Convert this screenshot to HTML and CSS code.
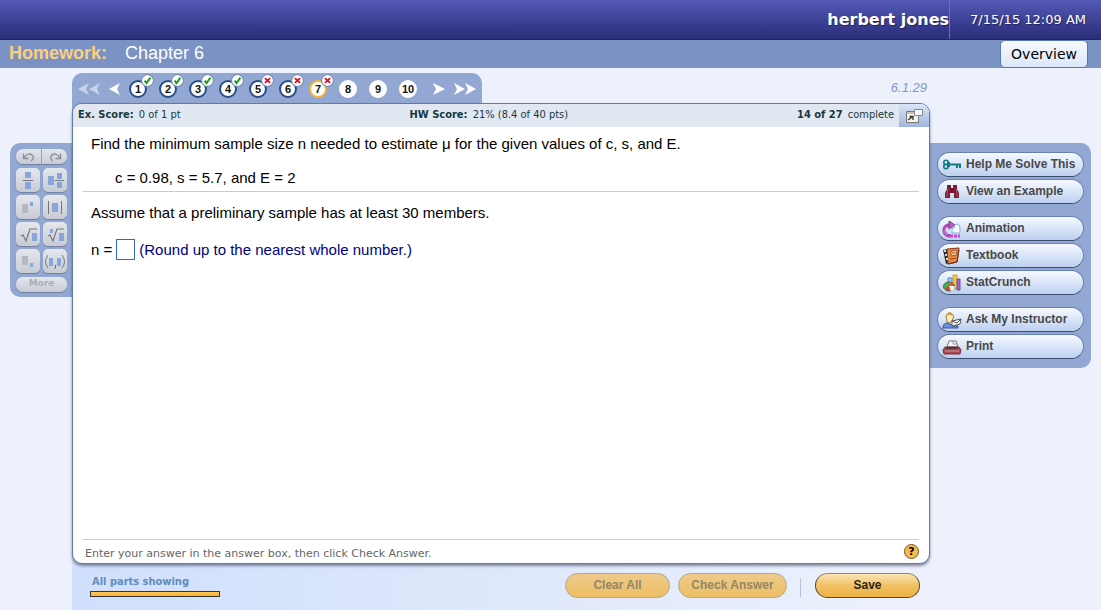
FILE: index.html
```html
<!DOCTYPE html>
<html lang="en">
<head>
    <meta charset="UTF-8">
    <meta name="viewport" content="width=device-width, initial-scale=1.0">
    <title>Homework: Chapter 6</title>
    <link rel="stylesheet" href="styles.css">
</head>
<body>
    <!-- shared icon shapes -->
    <svg class="defs" width="0" height="0" aria-hidden="true">
        <symbol id="correct" viewBox="0 0 12 12">
            <circle cx="6" cy="6" r="5.5" fill="#fff" stroke="#7187b5"/>
            <path d="M3.3 6.2l1.8 2.2 3.6-5" fill="none" stroke="#15a015" stroke-width="1.8"/>
        </symbol>
        <symbol id="wrong" viewBox="0 0 12 12">
            <circle cx="6" cy="6" r="5.5" fill="#fff" stroke="#7187b5"/>
            <path d="M3.6 3.8l4.8 4.4M8.4 3.8l-4.8 4.4" stroke="#d11222" stroke-width="1.7"/>
        </symbol>
    </svg>

    <header class="topbar">
        <span class="user">herbert jones</span>
        <span class="date">7/15/15 12:09 AM</span>
    </header>

    <div class="titlebar">
        <h1><span class="label">Homework:</span> Chapter 6</h1>
        <button class="overview">Overview</button>
    </div>

    <div class="workspace">
        <aside class="tools">
            <div class="history">
                <button aria-label="Undo"><svg width="14" height="10" viewBox="0 0 14 10"><path d="M1.500 1.500v5h5M2 6c2-4 6-5 8-3s2 4-1 6" fill="none" stroke="#888d99" stroke-width="1.300"/></svg></button>
                <button aria-label="Redo"><svg width="14" height="10" viewBox="0 0 14 10"><path d="M12.500 1.500v5h-5M12 6c-2-4-6-5-8-3s-2 4 1 6" fill="none" stroke="#888d99" stroke-width="1.300"/></svg></button>
            </div>
            <div class="math">
                <button aria-label="Fraction"><svg width="22" height="22"><path d="M8 3h6v6H8zM8 13h6v7H8z" fill="#8aa5da"/><path d="M6 11.500h10" stroke="#777"/></svg></button>
                <button aria-label="Mixed number"><svg width="22" height="22"><path d="M4 7h6v9H4zM13 4h5v6h-5zM13 13h5v6h-5z" fill="#8aa5da"/><path d="M11 11.500h9" stroke="#777"/></svg></button>
                <button aria-label="Exponent"><svg width="22" height="22"><path d="M5 8h6v9H5z" fill="#b5b9bd"/><path d="M13 6h3v4h-3z" fill="#8aa5da"/></svg></button>
                <button aria-label="Absolute value"><svg width="22" height="22"><path d="M8 7h6v9H8z" fill="#8aa5da"/><path d="M4.500 5v13M17.500 5v13" stroke="#777"/></svg></button>
                <button aria-label="Square root"><svg width="22" height="22"><path d="M15 10h5v8h-5z" fill="#8aa5da"/><path d="M4 13l2-1 3 6 4-12h7" fill="none" stroke="#777" stroke-width="1.200"/></svg></button>
                <button aria-label="Root"><svg width="22" height="22"><path d="M15 10h5v8h-5zM6 6h3v4H6z" fill="#8aa5da"/><path d="M4 13l2-1 3 6 4-12h7" fill="none" stroke="#777" stroke-width="1.200"/></svg></button>
                <button aria-label="Subscript"><svg width="22" height="22"><path d="M5 6h6v9H5z" fill="#b5b9bd"/><path d="M13 13h3v4h-3z" fill="#8aa5da"/></svg></button>
                <button aria-label="Ordered pair"><svg width="22" height="22"><path d="M5 8h4v8H5zM13 8h4v8h-4z" fill="#8aa5da"/><path d="M4 5q-5 7 0 13M18 5q5 7 0 13" fill="none" stroke="#777"/><path d="M11.500 15v2l-1 2" fill="none" stroke="#666"/></svg></button>
            </div>
            <button class="more" disabled>More</button>
        </aside>

        <main class="center">
            <div class="navrow">
                <nav class="questions">
                    <button aria-label="First question"><svg class="faded" width="22" height="14" viewBox="0 0 22 14"><path d="M0 7l11-6-3 6 3 6zM11 7l11-6-3 6 3 6z"/></svg></button>
                    <button aria-label="Previous question"><svg width="11" height="14" viewBox="0 0 11 14"><path d="M0 7l11-6-3 6 3 6z"/></svg></button>
                    <div class="numbers">
                        <button class="num done">1<svg class="badge"><use href="#correct"/></svg></button>
                        <button class="num done">2<svg class="badge"><use href="#correct"/></svg></button>
                        <button class="num done">3<svg class="badge"><use href="#correct"/></svg></button>
                        <button class="num done">4<svg class="badge"><use href="#correct"/></svg></button>
                        <button class="num done">5<svg class="badge"><use href="#wrong"/></svg></button>
                        <button class="num done">6<svg class="badge"><use href="#wrong"/></svg></button>
                        <button class="num current">7<svg class="badge"><use href="#wrong"/></svg></button>
                        <button class="num">8</button>
                        <button class="num">9</button>
                        <button class="num">10</button>
                    </div>
                    <button aria-label="Next question"><svg width="12" height="14" viewBox="0 0 12 14"><path d="M12 7L0 1l3 6-3 6z"/></svg></button>
                    <button aria-label="Last question"><svg width="22" height="14" viewBox="0 0 22 14"><path d="M11 7L0 1l3 6-3 6zM22 7L11 1l3 6-3 6z"/></svg></button>
                </nav>
                <span class="section">6.1.29</span>
            </div>

            <section class="card">
                <div class="scores">
                    <span><b>Ex. Score:</b> 0 of 1 pt</span>
                    <span><b>HW Score:</b> 21% (8.4 of 40 pts)</span>
                    <span><b>14 of 27</b> complete</span>
                    <button class="popout" aria-label="Open in new window">
                        <svg width="18" height="16" viewBox="0 0 18 16">
                            <path d="M1.500 3.500h12v11h-12z" fill="#f4f4ef" stroke="#777"/>
                            <path d="M2 5h11" stroke="#999"/>
                            <path d="M9.500 1.500h8v6h-8z" fill="#f7f9fd" stroke="#888"/>
                            <path d="M3 12l4-3M4.500 8.500H8V12" fill="none" stroke="#333" stroke-width="1.300"/>
                        </svg>
                    </button>
                </div>
                <div class="problem">
                    <p class="prompt">Find the minimum sample size n needed to estimate μ for the given values of c, s, and E.</p>
                    <p class="given">c = 0.98, s = 5.7, and E = 2</p>
                    <hr>
                    <p class="assume">Assume that a preliminary sample has at least 30 members.</p>
                    <div class="answer">
                        <label for="n">n =</label>
                        <input type="text" id="n">
                        <span class="hint">(Round up to the nearest whole number.)</span>
                    </div>
                </div>
                <div class="help">
                    <span>Enter your answer in the answer box, then click Check Answer.</span>
                    <button aria-label="Help">?</button>
                </div>
            </section>

            <footer class="actions">
                <div class="parts">
                    <span>All parts showing</span>
                    <div class="progress"></div>
                </div>
                <button class="pill clear" disabled>Clear All</button>
                <button class="pill check" disabled>Check Answer</button>
                <div class="divider"></div>
                <button class="pill save">Save</button>
            </footer>
        </main>

        <aside class="resources">
            <div class="group">
                <button>
                    <svg width="20" height="18" viewBox="0 0 20 18"><path d="M7 8.500h12M15 8v4M18 8v4" fill="none" stroke="#137a82" stroke-width="2"/><circle cx="4" cy="6.500" r="2.200" fill="none" stroke="#137a82" stroke-width="1.600"/><circle cx="4" cy="10.500" r="2.200" fill="none" stroke="#137a82" stroke-width="1.600"/><path d="M5 6h3v5H5z" fill="#137a82"/></svg>
                    Help Me Solve This
                </button>
                <button>
                    <svg width="20" height="18" viewBox="0 0 20 18"><path d="M5 2h4v3h2V2h4v4l2 4v5h-5v-5H8v5H3v-5l2-4z" fill="#7c1c30"/><path d="M6 6l-1.500 8M14 6l1.500 8" fill="none" stroke="#b55a68"/><path d="M8 7h4" stroke="#4d0d1c"/></svg>
                    View an Example
                </button>
            </div>
            <div class="group">
                <button>
                    <svg width="20" height="18" viewBox="0 0 20 18"><path d="M8 16C1 15 0 7 7 5" fill="none" stroke="#a84cae" stroke-width="3.500"/><path d="M7 1l6 4-6 4z" fill="#b862b8" stroke="#803584"/><path d="M5 15C3 13 2 10 5 7" fill="none" stroke="#efb8ef"/><path d="M10 13v-3q0-2 2-2 0-4 3-4 3 0 3 4v5z" fill="#f4f8ff" stroke="#82b1df"/><path d="M8 16h10" stroke="#c64bd0" stroke-width="3" stroke-dasharray="3 1"/></svg>
                    Animation
                </button>
                <button>
                    <svg width="20" height="18" viewBox="0 0 20 18"><path d="M1 3l4-1 2 14-3 1z" fill="#282c38"/><path d="M5 2l12-1-2 14-9 2z" fill="#e78a40" stroke="#843918"/><path d="M3 3v2M4 7v2M5 11v2" stroke="#d6d8dc" stroke-width="2"/><path d="M9 4l6-1-1 5-5 1z" fill="#f5d39c" stroke="#ad592d"/><path d="M10 6l3-.5M8 12l6-1" stroke="#944a25"/><path d="M6 17l9-2 2-12" fill="none" stroke="#593425"/></svg>
                    Textbook
                </button>
                <button>
                    <svg width="20" height="18" viewBox="0 0 20 18"><path d="M11 1h4v14h-4z" fill="#f5cf30" stroke="#bca03a"/><path d="M15 5h3v11h-3z" fill="#9c69d0" stroke="#7548a4"/><path d="M6 4h4v6H6z" fill="#9cc7ee" stroke="#6589b5"/><ellipse cx="7" cy="12.500" rx="5.500" ry="4.500" fill="#43ad4b" stroke="#326d43"/><path d="M7 12h5.500a5 4 0 0 1-4 5z" fill="#f5f5ee"/><path d="M7 12V8q4 0 5 4z" fill="#e95346"/><path d="M7 12l-4 3q2 2 5.500 2z" fill="#de372f"/></svg>
                    StatCrunch
                </button>
            </div>
            <div class="group">
                <button>
                    <svg width="20" height="18" viewBox="0 0 20 18"><path d="M1 16q0-4 5-4l5 3h5v2H1z" fill="#6790d5" stroke="#385b98"/><path d="M5 9l-1-4q1-4 5-3 4 2 2 6l-3 4-3-1z" fill="#fff0c4" stroke="#9c7b39"/><path d="M4 5q1-4 5-3l2 3-4-1z" fill="#d2a845"/><path d="M10 10l9-2-1 5-8 2z" fill="#fff" stroke="#54545c"/><path d="M10 10l5 2 4-4" fill="none" stroke="#555"/></svg>
                    Ask My Instructor
                </button>
                <button>
                    <svg width="20" height="18" viewBox="0 0 20 18"><path d="M5 9l2-6h7l2 6z" fill="#f8f8fa" stroke="#777"/><path d="M11 3v3h4" fill="none" stroke="#999"/><path d="M3 9h14l2 3-1 4H2l-1-4z" fill="#a84b57" stroke="#78303b"/><path d="M5 9h10l1 2H4z" fill="#4d3540"/><path d="M3 13h14" stroke="#d88d96"/></svg>
                    Print
                </button>
            </div>
        </aside>
    </div>
</body>
</html>
```

FILE: styles.css
```css
* {
    box-sizing: border-box;
}

body {
    margin: 0;
    min-height: 100vh;
    display: flex;
    flex-direction: column;
    font-family: "Liberation Sans", Arial, sans-serif;
    background: #edf1fc;
}

button {
    margin: 0;
    padding: 0;
    border: none;
    background: none;
    font-family: inherit;
    cursor: pointer;
}

button:disabled {
    cursor: default;
}

svg {
    display: block;
    flex: none;
}

.defs {
    position: absolute;
}

/* header */
.topbar {
    height: 40px;
    display: flex;
    justify-content: flex-end;
    align-items: center;
    color: #fff;
    font-family: "DejaVu Sans", Verdana, sans-serif;
    background: linear-gradient(#5459b6, #3a3e91 60%, #2b2e78);
    border-bottom: 1px solid #23265f;
    text-shadow: 1px 1px 1px rgba(0,0,0,0.4);
}

.user {
    font-size: 16px;
    font-weight: bold;
}

.date {
    padding: 0 15px 0 20px;
    border-left: 1px solid #6a70b9;
    font-size: 13px;
    line-height: 39px;
}

.titlebar {
    height: 28px;
    padding: 0 13px 0 9px;
    display: flex;
    justify-content: space-between;
    align-items: center;
    background: #7a93c4;
}

.titlebar h1 {
    margin: 0;
    padding-bottom: 2px;
    font-size: 18px;
    font-weight: normal;
    color: #fff;
}

.titlebar .label {
    margin-right: 13px;
    font-weight: bold;
    color: #fbd07c;
}

.overview {
    height: 28px;
    padding: 0 10px;
    border: 1px solid #5878ae;
    border-radius: 5px;
    font-family: "DejaVu Sans", Verdana, sans-serif;
    font-size: 14px;
    background: linear-gradient(#f7faff, #dbe7f9);
}

.workspace {
    flex: 1;
    display: flex;
    align-items: flex-start;
    padding: 0 10px;
}

/* math palette */
.tools {
    width: 62px;
    margin-top: 75px;
    padding: 6px 5px 5px 6px;
    display: flex;
    flex-direction: column;
    gap: 4px;
    background: #92a8d3;
    border-radius: 10px 0 0 10px;
}

.tools button {
    display: flex;
    justify-content: center;
    align-items: center;
    border-radius: 5px;
    background: linear-gradient(#e4e7ed, #c7cbd4);
    box-shadow: 0 1px 1px #6f7d99;
}

.history {
    display: flex;
    gap: 1px;
}

.history button {
    flex: 1;
    height: 15px;
}

.history button:first-child {
    border-radius: 7px 0 0 7px;
}

.history button:last-child {
    border-radius: 0 7px 7px 0;
}

.math {
    display: grid;
    grid-template-columns: 1fr 1fr;
    gap: 3px;
}

.math button {
    height: 24px;
}

.tools .more {
    height: 15px;
    padding-bottom: 3px;
    border-radius: 7px;
    color: #a9b0b2;
    font-family: "DejaVu Sans", Verdana, sans-serif;
    font-size: 9px;
    font-weight: bold;
}

/* center column */
.center {
    flex: 1;
    align-self: stretch;
    min-width: 0;
    display: flex;
    flex-direction: column;
}

.navrow {
    height: 35px;
    padding-top: 5px;
    display: flex;
    justify-content: space-between;
}

/* runs on behind the rounded corner of the card */
.questions {
    margin-bottom: -10px;
    padding: 1px 6px 10px;
    display: flex;
    align-items: center;
    gap: 9px;
    background: #92a8d3;
    border-radius: 10px 10px 0 0;
}

.questions path {
    fill: #fff;
}

.questions .faded {
    opacity: 0.5;
}

.numbers {
    display: flex;
    gap: 12px;
    margin-right: 7px;
}

.num {
    position: relative;
    width: 18px;
    height: 18px;
    border: 2px solid #fff;
    border-radius: 50%;
    background: #fff;
    color: #111;
    font-size: 11px;
    font-weight: bold;
    line-height: 14px;
    white-space: nowrap;
    display: flex;
    justify-content: center;
}

.num.done {
    border-color: #284d8a;
}

.num.current {
    border-color: #fab52f;
}

.badge {
    position: absolute;
    top: -8px;
    right: -9px;
    width: 13px;
    height: 13px;
}

.questions .badge path {
    fill: none;
}

.section {
    padding: 7px 3px 0 0;
    font-size: 13px;
    font-style: italic;
    color: #7f97cb;
}

.card {
    position: relative;
    flex: 1;
    display: flex;
    flex-direction: column;
    overflow: hidden;
    background: #fff;
    border: 1px solid #6079ae;
    border-radius: 10px;
    box-shadow: 0 2px 3px rgba(60,70,100,0.6);
}

.scores {
    height: 23px;
    padding-left: 5px;
    display: flex;
    justify-content: space-between;
    background: #e1e8f2;
    color: #17383f;
    font-family: "DejaVu Sans Condensed", "DejaVu Sans", sans-serif;
    font-size: 11px;
    line-height: 22px;
}

.scores b {
    margin-right: 2px;
}

.scores span:nth-child(2) {
    flex: 1;
    text-align: center;
}

.popout {
    width: 30px;
    margin-left: 5px;
    display: flex;
    justify-content: center;
    align-items: center;
    background: linear-gradient(#dbe4f4, #a0b4dc);
}

.problem {
    flex: 1;
    padding: 8px 10px 0;
    font-size: 15px;
    line-height: 18px;
}

.problem p {
    margin: 0 8px 16px;
}

.problem .given {
    margin: 0 32px 4px;
}

.problem hr {
    margin: 0 0 12px;
    border: none;
    border-top: 1px solid #ccc;
}

.problem .assume {
    margin-bottom: 17px;
}

.answer {
    margin: 0 8px;
    display: flex;
    align-items: center;
    gap: 4px;
}

.answer input {
    width: 19px;
    height: 21px;
    padding: 0;
    border: 1px solid #3366cc;
    font-size: 14px;
}

.hint {
    color: #000080;
}

.help {
    height: 24px;
    margin: 0 10px;
    padding-left: 2px;
    display: flex;
    justify-content: space-between;
    align-items: center;
    border-top: 1px solid #ccc;
    color: #666;
    font-family: "DejaVu Sans", Verdana, sans-serif;
    font-size: 11px;
}

.help span {
    padding-top: 3px;
}

.help button {
    width: 15px;
    height: 15px;
    border: 1px solid #6f5629;
    border-radius: 50%;
    background: #f5bd50;
    font-size: 11px;
    font-weight: bold;
    line-height: 13px;
}

/* footer */
.actions {
    height: 56px;
    margin-top: -10px;
    padding: 10px 10px 4px 18px;
    display: flex;
    align-items: center;
    gap: 8px;
    background: linear-gradient(90deg, #d0dffb, #edf1fc);
}

.parts {
    margin-right: auto;
    align-self: flex-start;
    padding-top: 10px;
    color: #5f8dbc;
    font-family: "DejaVu Sans Condensed", "DejaVu Sans", sans-serif;
    font-size: 11px;
    font-weight: bold;
    line-height: 15px;
}

.parts span {
    padding-left: 2px;
}

.progress {
    width: 130px;
    height: 6px;
    margin-top: 2px;
    border: 1px solid #333;
    background: linear-gradient(#ffc857, #fbb034);
}

.pill {
    width: 105px;
    height: 25px;
    padding-bottom: 1px;
    border: 1px solid #57482b;
    border-top-color: #9a875a;
    border-radius: 13px;
    background: linear-gradient(#fbe5b8, #f1c164 50%, #edb242);
    color: #2f2412;
    font-size: 12px;
    font-weight: bold;
}

.pill:disabled {
    border-color: #b1a78f;
    background: linear-gradient(#edcb8b, #eebe62);
    color: #928668;
}

.check {
    width: 109px;
}

.divider {
    width: 1px;
    height: 19px;
    margin: 4px 6px 0 5px;
    background: #b9c3d7;
}

/* resource buttons */
.resources {
    width: 161px;
    margin-top: 75px;
    padding: 9px 7px;
    display: flex;
    flex-direction: column;
    gap: 12px;
    background: #92a8d3;
    border-radius: 0 10px 10px 0;
}

.group {
    display: flex;
    flex-direction: column;
    gap: 2px;
}

.group button {
    height: 25px;
    padding: 0 4px 2px;
    display: flex;
    align-items: center;
    gap: 4px;
    border: 1px solid #6781b1;
    border-bottom-color: #3a4e70;
    border-radius: 13px;
    background: linear-gradient(#f7faff, #d9e5f8 50%, #bdd0ef);
    color: #484848;
    font-size: 12px;
    font-weight: bold;
    white-space: nowrap;
}

.group svg {
    margin-top: 2px;
}
```
